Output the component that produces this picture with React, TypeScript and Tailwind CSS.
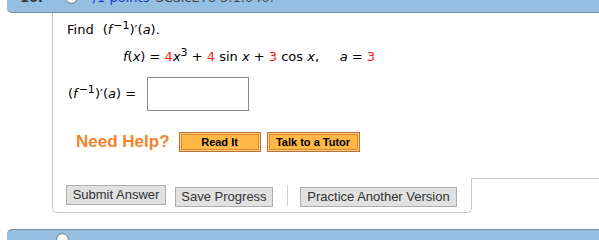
import React from 'react';

const verdana = { fontFamily: '"DejaVu Sans", Verdana, sans-serif' };
const arial = { fontFamily: '"Liberation Sans", Arial, sans-serif' };

const Red: React.FC<{ children: React.ReactNode }> = ({ children }) => (
  <span className="text-[#ff1a1a]">{children}</span>
);

const FInv = () => (
  <span>
    (<i>f</i>
    <sup className="text-[11px] relative -top-[5px] ml-px">&minus;1</sup>)&prime;(<i>a</i>)
  </span>
);

const HelpButton: React.FC<{ label: string; w: string }> = ({ label, w }) => (
  <span className={`inline-flex h-[20px] ${w} border border-[#b8702c] bg-[#ffd08a] p-px`}>
    <span className="flex-1 flex items-center justify-center border border-[#d98a2e] bg-[#ffb846] text-[11px] font-bold text-black" style={arial}>
      {label}
    </span>
  </span>
);

const GrayButton: React.FC<{ label: string; w: string }> = ({ label, w }) => (
  <span className={`inline-flex items-center justify-center h-[20px] ${w} border border-[#adadad] bg-[#e1e1e1] text-[13px] text-[#333]`} style={arial}>
    {label}
  </span>
);

export default function App() {
  return (
    <div className="w-[599px] h-[240px] bg-white overflow-hidden text-black">
      {/* question header, mostly scrolled off the top */}
      <div className="ml-[7px] h-[13px] bg-[#95bfe0] border-b border-[#6f8fa7] rounded-bl-[5px] overflow-hidden">
        <div className="flex items-center h-[13px] -mt-[9px] text-[13px]" style={verdana}>
          <span className="ml-[13px] font-bold text-[#333]">10.</span>
          <svg className="ml-[22px]" width="13" height="13" viewBox="0 0 13 13">
            <circle cx="6.5" cy="6.5" r="5.8" fill="#fff" stroke="#777" strokeWidth="1" />
            <circle cx="6.5" cy="6.5" r="2.5" fill="#4a9a3a" />
          </svg>
          <span className="ml-[10px] text-[#1f2fc4]">-/1 points</span>
          <span className="ml-[6px] text-[#444]">SCalcET8 3.1.040.</span>
        </div>
      </div>

      <div className="flex pl-[52px]">
        <div className="w-[420px] flex flex-col">
          <div className="h-[165px] border-l border-[#c8c8c8] pl-[14px] pt-[8px] text-[13px]" style={verdana}>
            <div className="h-[18px] leading-[18px]">
              Find<span className="ml-[9px]"><FInv />.</span>
            </div>
            <div className="h-[18px] leading-[18px] mt-[9px] pl-[56px] whitespace-pre">
              <i>f</i>(<i>x</i>) = <Red>4</Red><i>x</i>
              <sup className="text-[11px] relative -top-[5px]">3</sup> + <Red>4</Red> sin <i>x</i> + <Red>3</Red> cos <i>x</i>,     <i>a</i> = <Red>3</Red>
            </div>
            <div className="flex items-center mt-[11px]">
              <span className="pl-px">
                <FInv /> =
              </span>
              <span className="ml-[11px] w-[102px] h-[34px] border border-[#8a8a8a] bg-white" />
            </div>
            <div className="flex items-center mt-[18px] pl-[9px]">
              <span className="text-[17px] font-bold text-[#f5822a]" style={arial}>
                Need Help?
              </span>
              <span className="ml-[9px] flex gap-[6px]">
                <HelpButton label="Read It" w="w-[82px]" />
                <HelpButton label="Talk to a Tutor" w="w-[93px]" />
              </span>
            </div>
          </div>
          <div className="h-[35px] border-l border-r border-b border-[#c8c8c8] rounded-b-[5px] flex items-center pl-[13px]">
            <GrayButton label="Submit Answer" w="w-[100px]" />
            <span className="ml-[9px]">
              <GrayButton label="Save Progress" w="w-[98px]" />
            </span>
            <span className="ml-[14px] w-px h-[21px] bg-[#cfcfcf]" />
            <span className="ml-[12px]">
              <GrayButton label="Practice Another Version" w="w-[157px]" />
            </span>
          </div>
        </div>
        <div className="flex-1 flex flex-col">
          <div className="h-[165px]" />
          <div className="h-[34px] border-t border-[#c8c8c8]" />
        </div>
      </div>

      {/* next question header */}
      <div className="mt-[16px] ml-[7px] h-[20px] bg-[#95bfe0] border-t border-[#6f8fa7] rounded-tl-[5px] flex">
        <svg className="ml-[49px] mt-[3px]" width="13" height="13" viewBox="0 0 13 13">
          <circle cx="6.5" cy="6.5" r="5.8" fill="#fff" stroke="#777" strokeWidth="1" />
        </svg>
      </div>
    </div>
  );
}
